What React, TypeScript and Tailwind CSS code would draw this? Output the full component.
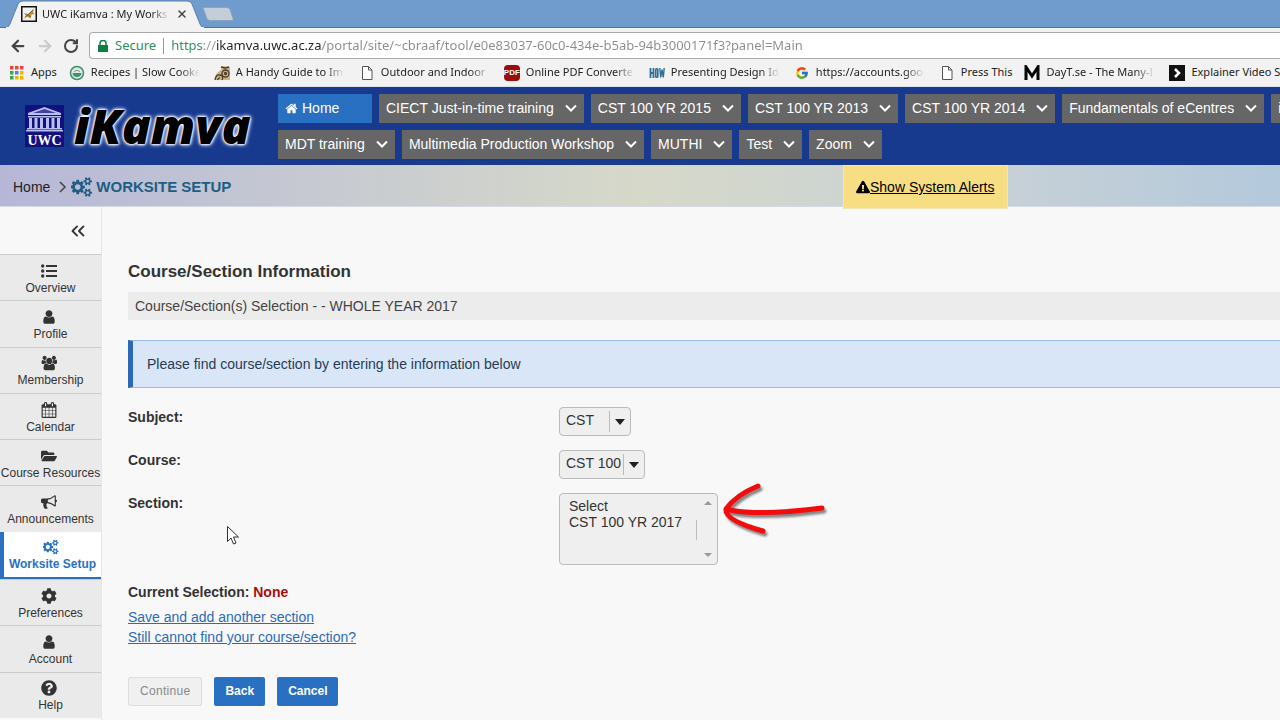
import React, { useState } from "react";
import { FaCog, FaExclamationTriangle, FaFolderOpen, FaQuestionCircle } from "react-icons/fa";
import { FcGoogle } from "react-icons/fc";
import { ArrowLeft, ArrowRight, ChevronsLeft, RotateCw, X } from "lucide-react";
import clsx from "clsx";

type IconProps = { className?: string };

const HomeIcon = ({ className }: IconProps) => (
  <svg viewBox="0 0 1792 1792" fill="currentColor" className={className}>
    <path d="M1472 992v480q0 26-19 45t-45 19h-384v-384h-256v384h-384q-26 0-45-19t-19-45v-480q0-1 .5-3t.5-3l575-474 575 474q1 2 1 6zm223-69l-62 74q-8 9-21 11h-3q-13 0-21-7l-692-577-692 577q-12 8-24 7-13-2-21-11l-62-74q-8-10-7-23.5t11-21.5l719-599q32-26 76-26t76 26l244 204v-195q0-14 9-23t23-9h192q14 0 23 9t9 23v408l219 182q10 8 11 21.5t-7 23.5z" />
  </svg>
);

const ListIcon = ({ className }: IconProps) => (
  <svg viewBox="0 0 16 16" fill="currentColor" className={className}>
    <circle cx="1.700" cy="3" r="1.700" />
    <circle cx="1.700" cy="8" r="1.700" />
    <circle cx="1.700" cy="13" r="1.700" />
    <path d="M5 2h11v2h-11zM5 7h11v2h-11zM5 12h11v2h-11z" />
  </svg>
);

const UserIcon = ({ className }: IconProps) => (
  <svg viewBox="0 0 1792 1792" fill="currentColor" className={className}>
    <path d="M1536 1399q0 109-62.5 187t-150.5 78h-854q-88 0-150.5-78t-62.5-187q0-85 8.5-160.5t31.5-152 58.5-131 94-89 134.5-34.5q131 128 313 128t313-128q76 0 134.5 34.5t94 89 58.5 131 31.5 152 8.5 160.5zm-256-887q0 159-112.5 271.5t-271.5 112.5-271.5-112.5-112.5-271.5 112.5-271.5 271.5-112.5 271.5 112.5 112.5 271.5z" />
  </svg>
);

const UsersIcon = ({ className }: IconProps) => (
  <svg viewBox="0 0 1984 1792" fill="currentColor" className={className}>
    <path d="M657 896q-162 5-265 128h-134q-82 0-138-40.5t-56-118.5q0-353 124-353 6 0 43.5 21t97.5 42.5 119 21.5q67 0 133-23-5 37-5 66 0 159 90 294zm1071 637q0 120-73 189.5t-194 69.5h-874q-121 0-194-69.5t-73-189.5q0-53 3.5-103.5t14-109 26.5-108.5 43-97.5 62-81 85.5-53.5 111.5-20q10 0 43 21.5t73 48 107 48 135 21.5 135-21.5 107-48 73-48 43-21.5q61 0 111.5 20t85.5 53.5 62 81 43 97.5 26.5 108.5 14 109 3.5 103.5zm-1024-1277q0 106-75 181t-181 75-181-75-75-181 75-181 181-75 181 75 75 181zm704 384q0 159-112.5 271.5t-271.5 112.5-271.5-112.5-112.5-271.5 112.5-271.5 271.5-112.5 271.5 112.5 112.5 271.5zm576 225q0 78-56 118.5t-138 40.5h-134q-103-123-265-128 90-135 90-294 0-29-5-66 66 23 133 23 59 0 119-21.5t97.5-42.5 43.5-21q124 0 124 353zm-128-609q0 106-75 181t-181 75-181-75-75-181 75-181 181-75 181 75 75 181z" />
  </svg>
);

const CalendarIcon = ({ className }: IconProps) => (
  <svg viewBox="0 0 1792 1792" fill="currentColor" className={className}>
    <path d="M192 1664h288v-288h-288v288zm352 0h320v-288h-320v288zm-352-352h288v-320h-288v320zm352 0h320v-320h-320v320zm-352-384h288v-288h-288v288zm736 736h320v-288h-320v288zm-384-736h320v-288h-320v288zm768 736h288v-288h-288v288zm-384-352h320v-320h-320v320zm-352-864v-288q0-13-9.5-22.5t-22.5-9.5h-64q-13 0-22.5 9.5t-9.5 22.5v288q0 13 9.5 22.5t22.5 9.5h64q13 0 22.5-9.5t9.5-22.5zm736 864h288v-320h-288v320zm-384-384h320v-288h-320v288zm384 0h288v-288h-288v288zm32-480v-288q0-13-9.5-22.5t-22.5-9.5h-64q-13 0-22.5 9.5t-9.5 22.5v288q0 13 9.5 22.5t22.5 9.5h64q13 0 22.5-9.5t9.5-22.5zm384-64v1280q0 52-38 90t-90 38h-1408q-52 0-90-38t-38-90v-1280q0-52 38-90t90-38h128v-96q0-66 47-113t113-47h64q66 0 113 47t47 113v96h384v-96q0-66 47-113t113-47h64q66 0 113 47t47 113v96h128q52 0 90 38t38 90z" />
  </svg>
);

const BullhornIcon = ({ className }: IconProps) => (
  <svg viewBox="0 0 1792 1792" fill="currentColor" className={className}>
    <path d="M1664 640q53 0 90.5 37.5t37.5 90.5-37.5 90.5-90.5 37.5v384q0 52-38 90t-90 38q-417-347-812-380-58 19-91 66t-31 100.5 40 92.5q-20 33-23 65.5t6 58 33.5 55 48 50 61.5 50.5q-29 58-111.5 83t-168.5 11.5-132-55.5q-7-23-29.5-87.5t-32-94.5-23-89-15-101 3.5-98.5 22-110.5h-122q-66 0-113-47t-47-113v-192q0-66 47-113t113-47h480q435 0 896-384 52 0 90 38t38 90v384zm-128 604v-954q-394 302-768 343v270q377 42 768 341z" />
  </svg>
);

const CogsIcon = ({ className }: IconProps) => (
  <svg viewBox="0 0 1920 1792" fill="currentColor" className={className}>
    <path d="M832 896q0-106-75-181t-181-75-181 75-75 181 75 181 181 75 181-75 75-181zm768 512q0-52-38-90t-90-38-90 38-38 90q0 53 37.5 90.5t90.5 37.5 90.5-37.5 37.5-90.5zm0-1024q0-52-38-90t-90-38-90 38-38 90q0 53 37.5 90.5t90.5 37.5 90.5-37.5 37.5-90.5zm-384 421v185q0 10-7 19.5t-16 10.5l-155 24q-11 35-32 76 34 48 90 115 7 11 7 20 0 12-7 19-23 30-82.5 89.5t-78.5 59.5q-11 0-21-7l-115-90q-37 19-77 31-11 108-23 155-7 24-30 24h-186q-11 0-20-7.5t-10-17.5l-23-153q-34-10-75-31l-118 89q-7 7-20 7-11 0-21-8-144-133-144-160 0-9 7-19 10-14 41-53t47-61q-23-44-35-82l-152-24q-10-1-17-9.5t-7-19.5v-185q0-10 7-19.5t16-10.5l155-24q11-35 32-76-34-48-90-115-7-11-7-20 0-12 7-20 22-30 82-89t79-59q11 0 21 7l115 90q34-18 77-32 11-108 23-154 7-24 30-24h186q11 0 20 7.5t10 17.5l23 153q34 10 75 31l118-89q8-7 20-7 11 0 21 8 144 133 144 160 0 8-7 19-12 16-42 54t-45 60q23 48 34 82l152 23q10 2 17 10.5t7 19.5zm640 533v140q0 16-149 31-12 27-30 52 51 113 51 138 0 4-4 7-122 71-124 71-8 0-46-47t-52-68q-20 2-30 2t-30-2q-14 21-52 68t-46 47q-2 0-124-71-4-3-4-7 0-25 51-138-18-25-30-52-149-15-149-31v-140q0-16 149-31 13-29 30-52-51-113-51-138 0-4 4-7 4-2 35-20t59-34 30-16q8 0 46 46.5t52 67.5q20-2 30-2t30 2q51-71 92-112l6-2q4 0 124 70 4 3 4 7 0 25-51 138 17 23 30 52 149 15 149 31zm0-1024v140q0 16-149 31-12 27-30 52 51 113 51 138 0 4-4 7-122 71-124 71-8 0-46-47t-52-68q-20 2-30 2t-30-2q-14 21-52 68t-46 47q-2 0-124-71-4-3-4-7 0-25 51-138-18-25-30-52-149-15-149-31v-140q0-16 149-31 13-29 30-52-51-113-51-138 0-4 4-7 4-2 35-20t59-34 30-16q8 0 46 46.5t52 67.5q20-2 30-2t30 2q51-71 92-112l6-2q4 0 124 70 4 3 4 7 0 25-51 138 17 23 30 52 149 15 149 31z" />
  </svg>
);

const PageIcon = () => (
  <svg viewBox="0 0 16 16" fill="#fff" stroke="#555" className="size-4">
    <path d="M3.5 1.5h6l3.5 3.5v9.5h-9.5z" />
    <path d="M9.5 1.5v3.5h3.5" fill="none" />
  </svg>
);

const AppsIcon = () => (
  <svg viewBox="0 0 14 14" className="size-[14px]">
    {["#e8453c", "#e8453c", "#e8453c", "#34a853", "#4285f4", "#f4b400", "#34a853", "#f4b400", "#f4b400"].map(
      (fill, i) => (
        <rect key={i} x={(i % 3) * 5} y={Math.floor(i / 3) * 5} width="3.5" height="3.5" fill={fill} />
      )
    )}
  </svg>
);

const RecipesIcon = () => (
  <svg viewBox="0 0 16 16" className="size-4">
    <circle cx="8" cy="8" r="6.5" fill="#dfe9e2" stroke="#3f8f72" strokeWidth="1.5" />
    <path d="M3.500 8h9q-.5 4-4.500 4t-4.500-4z" fill="#3f8f72" />
    <path d="M5 6.500q3-2.500 6 0" fill="none" stroke="#8a9a90" />
  </svg>
);

const SpiralIcon = () => (
  <svg viewBox="0 0 16 16" className="size-4">
    <path d="M1 14q0-6 6-9l1-4 8 1v13h-15z" fill="#c9b48a" />
    <g fill="none" stroke="#4a3b24" strokeWidth="1.300">
      <circle cx="11.500" cy="8.500" r="3.500" />
      <circle cx="11.500" cy="8.500" r="1" />
      <path d="M1 15q1-6 5-5t2 5M3.500 15q1-2.500 2.500-2M7 2l4 1 4-1" />
    </g>
  </svg>
);

const PdfIcon = () => (
  <span className="flex size-4 items-center justify-center rounded-sm bg-[#9b0d0d] font-['Liberation_Sans',sans-serif] text-[8px] font-bold text-white">
    PDF
  </span>
);

const HowIcon = () => (
  <svg viewBox="0 0 16 16" fill="none" stroke="#2f6f95" className="size-4">
    <path d="M1.500 3v10M4.500 3v10M1.500 8h3" strokeWidth="1.800" />
    <rect x="6.800" y="3.800" width="2" height="8.500" rx=".8" strokeWidth="1.600" />
    <path d="M10.800 3l.9 9.500 1.300-8 1.300 8 .9-9.500" strokeWidth="1.400" />
  </svg>
);

const MIcon = () => (
  <svg viewBox="0 0 16 16" className="size-4">
    <path d="M2 15v-13l6 9 6-9v13" fill="none" stroke="#000" strokeWidth="3" />
  </svg>
);

const ExplainerIcon = () => (
  <svg viewBox="0 0 16 16" className="size-4">
    <rect width="16" height="16" fill="#111" />
    <path d="M6 4l4 4-4 4" fill="none" stroke="#fff" strokeWidth="2.5" />
  </svg>
);

const KamvaFavicon = () => (
  <svg viewBox="0 0 16 16" className="size-4 shrink-0">
    <rect x=".75" y=".75" width="14.5" height="14.5" fill="#eef0f2" stroke="#111" strokeWidth="1.5" />
    <path d="M2.500 13l2.500-3-2-3 4 1 6-5.500-1 3.500 1.500 2-3 .5-1 4-3-2z" fill="#b98d3a" />
    <path d="M4 11l4-3 4-4M6 9l4 2" stroke="#6f5520" strokeWidth=".7" fill="none" />
  </svg>
);

const ChevronDownIcon = () => (
  <svg viewBox="0 0 12 12" fill="none" stroke="currentColor" strokeWidth="2" className="size-3">
    <path d="M1 3.500l5 5 5-5" />
  </svg>
);

const UwcLogo = () => (
  <svg viewBox="0 0 39 42" className="h-[42px] w-[39px]" role="img" aria-label="UWC">
    <rect width="39" height="42" fill="#10107f" />
    <g fill="#b9bdf0">
      <path d="M3 8l16.5-6 16.5 6v2h-33z" />
      <path d="M3 11h33v1.5h-33zM2 23h35v1.5h-35zM1 25h37v1.500h-37z" />
      <path d="M4 13h3v10h-3zM9.500 13h3v10h-3zM15 13h3v10h-3zM21 13h3v10h-3zM26.500 13h3v10h-3zM32 13h3v10h-3z" />
    </g>
    <path d="M8 8l11.500-4 11.500 4z" fill="#3b3fa8" />
    <text x="19.500" y="40" textAnchor="middle" fill="#fff" fontSize="14" fontWeight="bold" fontFamily="Liberation Serif, serif">
      UWC
    </text>
  </svg>
);

const bookmarks = [
  { label: "Apps", icon: <AppsIcon /> },
  { label: "Recipes | Slow Cooke", icon: <RecipesIcon />, fade: true },
  { label: "A Handy Guide to Im", icon: <SpiralIcon />, fade: true },
  { label: "Outdoor and Indoor |", icon: <PageIcon />, fade: true },
  { label: "Online PDF Converte", icon: <PdfIcon />, fade: true },
  { label: "Presenting Design Ide", icon: <HowIcon />, fade: true },
  { label: "https://accounts.goog", icon: <FcGoogle className="size-[14px]" />, fade: true },
  { label: "Press This", icon: <PageIcon /> },
  { label: "DayT.se - The Many-I", icon: <MIcon />, fade: true },
  { label: "Explainer Video S", icon: <ExplainerIcon /> },
];

const sites = [
  "CIECT Just-in-time training",
  "CST 100 YR 2015",
  "CST 100 YR 2013",
  "CST 100 YR 2014",
  "Fundamentals of eCentres",
  "iKamva",
  "MDT training",
  "Multimedia Production Workshop",
  "MUTHI",
  "Test",
  "Zoom",
];

const tools = [
  { label: "Overview", Icon: ListIcon },
  { label: "Profile", Icon: UserIcon },
  { label: "Membership", Icon: UsersIcon },
  { label: "Calendar", Icon: CalendarIcon },
  { label: "Course Resources", Icon: FaFolderOpen },
  { label: "Announcements", Icon: BullhornIcon },
  { label: "Worksite Setup", Icon: CogsIcon, current: true },
  { label: "Preferences", Icon: FaCog },
  { label: "Account", Icon: UserIcon },
  { label: "Help", Icon: FaQuestionCircle },
];

const BrowserChrome = () => {
  const [url, setUrl] = useState(
    "https://ikamva.uwc.ac.za/portal/site/~cbraaf/tool/e0e83037-60c0-434e-b5ab-94b3000171f3?panel=Main"
  );

  return (
    <div className="bg-[#f2f2f2] font-['Noto_Sans','Open_Sans',sans-serif] text-[#444]">
      <div className="flex h-7 border-b border-[#4d72a0] bg-[#6f9bcd]">
        <div className="relative -mb-px flex h-7 w-[198px] items-center pl-[21px] pr-3">
          <svg viewBox="0 0 198 28" preserveAspectRatio="none" className="absolute inset-0 ml-[6px] h-full w-full">
            <path d="M0 28q3-1 4-4l8-20q1-3 5-3h164q4 0 5 3l8 20q1 3 4 4z" fill="#f2f2f2" stroke="#5b7fae" />
            <path d="M0 28h198" stroke="#f2f2f2" strokeWidth="2" />
          </svg>
          <div className="relative flex items-center">
            <KamvaFavicon />
            <span className="ml-[5px] w-[128px] overflow-hidden whitespace-nowrap text-[11px] text-[#222] [mask-image:linear-gradient(90deg,#000_85%,transparent)]">
              UWC iKamva : My Works
            </span>
            <button type="button" aria-label="Close tab" className="ml-[6px]">
              <X className="size-3" strokeWidth={3} />
            </button>
          </div>
        </div>
        <button type="button" aria-label="New tab" className="ml-1 self-center">
          <svg viewBox="0 0 32 14" className="h-[14px] w-8">
            <path d="M1 1q0-.5 1-.5h23q2 0 3 2l3 9q.5 2-1 2h-22q-2 0-3-2z" fill="#c5cdd8" stroke="#8ba4c4" />
          </svg>
        </button>
      </div>

      <div className="flex items-center pl-[9px] pt-1">
        <button type="button" aria-label="Back">
          <ArrowLeft className="size-[18px]" strokeWidth={3} />
        </button>
        <button type="button" aria-label="Forward" className="ml-[9px] text-[#ccc]">
          <ArrowRight className="size-[18px]" strokeWidth={3} />
        </button>
        <button type="button" aria-label="Reload" className="ml-[9px]">
          <RotateCw className="size-4" strokeWidth={3} />
        </button>
        <div className="ml-[10px] flex h-[27px] flex-1 items-center rounded-l border border-r-0 border-[#aaa] bg-white pl-2 text-[13px]">
          <svg viewBox="0 0 10 12" className="h-3 w-[10px]">
            <path d="M0 5h10v7h-10z" fill="#0b8043" />
            <path d="M2 5v-2q0-2.500 3-2.500t3 2.500v2" fill="none" stroke="#0b8043" strokeWidth="1.5" />
          </svg>
          <span className="ml-[7px] text-[#2a8f5c]">Secure</span>
          <span className="mx-[7px] h-4 w-px bg-[#999]" />
          <input
            type="text"
            aria-label="Address"
            value={url}
            onChange={(e) => setUrl(e.target.value)}
            className="min-w-0 flex-1 bg-[linear-gradient(90deg,#2a8f5c_33px,#999_33px,#999_45px,#222_45px,#222_151px,#8c8c8c_151px)] bg-clip-text text-transparent caret-black outline-none"
          />
        </div>
      </div>

      <nav aria-label="Bookmarks" className="flex h-7 items-center gap-3 overflow-hidden border-b border-[#dde1ea] pl-[9px] text-[11px]">
        {bookmarks.map(({ label, icon, fade }) => (
          <a key={label} href="#" className="flex shrink-0 items-center gap-[6px] whitespace-nowrap text-[#222]">
            <span className="flex w-4 justify-center">{icon}</span>
            <span
              className={clsx(
                fade && "w-[111px] [mask-image:linear-gradient(90deg,#000_80%,transparent_98%)]"
              )}
            >
              {label}
            </span>
          </a>
        ))}
      </nav>
    </div>
  );
};

const SiteHeader = () => (
  <header className="flex h-[78px] overflow-hidden bg-[#173a8e]">
    <a href="#" className="flex w-[278px] shrink-0 items-center pl-[25px]">
      <UwcLogo />
      <span className="ml-[10px] font-['Open_Sans','Noto_Sans',sans-serif] text-[48px] font-extrabold italic leading-none text-black [text-shadow:0_0_2px_#fff,0_0_2px_#fff,0_0_3px_#fff,0_0_4px_#cdd6ff,0_0_5px_#cdd6ff]">
        iKamva
      </span>
    </a>
    <nav aria-label="Sites" className="-mr-24 flex flex-1 flex-wrap content-start gap-[7px] pt-[7px] text-sm text-white">
      <a href="#" className="flex h-[29px] w-[94px] items-center gap-1 bg-[#2a70c2] px-[7px] pb-px">
        <HomeIcon className="size-[13px]" />
        Home
      </a>
      {sites.map((site) => (
        <div key={site} className="flex h-[29px] items-center bg-[#666] px-[7px] pb-px">
          <a href="#">{site}</a>
          <button type="button" aria-label={`${site} tools`} className="ml-[11px]">
            <ChevronDownIcon />
          </button>
        </div>
      ))}
    </nav>
  </header>
);

const Breadcrumb = () => (
  <div className="relative flex h-[42px] items-center border-b border-[#d5dae2] bg-[linear-gradient(90deg,#b6b7d8,#c4c7d2_21%,#d6d9c9_50%,#c9d1d6_76%,#b3c9dc)] pl-[13px] pt-[3px]">
    <a href="#" className="text-sm text-[#222]">
      Home
    </a>
    <svg viewBox="0 0 8 12" fill="none" stroke="#444" strokeWidth="1.5" className="ml-[9px] h-3 w-2">
      <path d="M1 1l5 5-5 5" />
    </svg>
    <h1 className="ml-1 flex items-center gap-[3px] text-[15px] font-bold text-[#205e83]">
      <CogsIcon className="h-5 w-[22px]" />
      WORKSITE SETUP
    </h1>
    <a
      href="#"
      className="absolute left-[843px] top-0 flex h-[44px] items-center border border-[#f3e6b4] bg-[#f7de83] px-3 text-sm text-black underline"
    >
      <FaExclamationTriangle className="size-[14px]" />
      Show System Alerts
    </a>
  </div>
);

const Sidebar = () => (
  <aside className="flex w-[102px] shrink-0 flex-col border-r border-[#e6e6e6] pb-[2px] text-[12px] text-[#333]">
    <button type="button" aria-label="Collapse menu" className="flex h-[47px] items-center justify-end pr-3">
      <ChevronsLeft className="size-[22px]" />
    </button>
    <nav aria-label="Tools" className="flex flex-1 flex-col">
      {tools.map(({ label, Icon, current }) => (
        <a
          key={label}
          href="#"
          aria-current={current ? "page" : undefined}
          className={clsx(
            "flex flex-1 flex-col items-center justify-center whitespace-nowrap pt-1",
            current
              ? "border-b-2 border-l-4 border-[#2a70c2] bg-white font-bold text-[#2a70c2]"
              : "border-t border-[#ccc] bg-[#eaeaea]"
          )}
        >
          <Icon className="mr-1 h-4 w-4" />
          {label}
        </a>
      ))}
    </nav>
  </aside>
);

const PullDown = ({ id, value, className }: { id: string; value: string; className: string }) => (
  <div className={clsx("relative flex h-[29px]", className)}>
    <select
      id={id}
      className="w-full appearance-none rounded-sm border border-[#bbb] bg-[#efefef] pb-[3px] pl-[6px] text-sm text-[#333]"
    >
      <option>{value}</option>
    </select>
    <span className="pointer-events-none absolute inset-y-1 right-0 flex w-[22px] items-center justify-center border-l border-[#bbb] pr-[2px]">
      <svg viewBox="0 0 10 6" className="h-[6px] w-[10px]">
        <path d="M0 0h10l-5 6z" fill="#222" />
      </svg>
    </span>
  </div>
);

const RedArrow = () => (
  <svg viewBox="0 0 110 60" className="ml-px mt-[-15px] h-[60px] w-[110px]" fill="none" strokeLinecap="round" strokeLinejoin="round">
    <g stroke="#555" strokeWidth="5" opacity=".7" className="blur-[1px]" transform="translate(2 3)">
      <path d="M39 8q-22 9-32 23-2 11 37 22" />
      <path d="M11 32q30 6 92-2" />
    </g>
    <g stroke="#f20d0d" strokeWidth="5">
      <path d="M39 8q-22 9-32 23-2 11 37 22" />
      <path d="M11 32q30 6 92-2" />
    </g>
  </svg>
);

const SectionForm = () => (
  <main className="min-w-0 flex-1 pl-[26px] pt-[54px] text-sm text-[#333]">
    <h2 className="text-[17px] font-bold leading-[22px]">Course/Section Information</h2>
    <p className="mt-[9px] bg-[#ececec] px-[7px] py-1 text-[#444]">
      Course/Section(s) Selection - - WHOLE YEAR 2017
    </p>
    <p className="mt-5 border border-l-[5px] border-r-0 border-[#9dbce3] border-l-[#2a69b4] bg-[#d9e6f7] px-[14px] py-[13px] text-[#263c55]">
      Please find course/section by entering the information below
    </p>

    <form onSubmit={(e) => e.preventDefault()}>
      <div className="mt-[19px] grid grid-cols-[431px_1fr] gap-y-[14px]">
        <label htmlFor="subject" className="font-bold">
          Subject:
        </label>
        <PullDown id="subject" value="CST" className="w-[72px]" />
        <label htmlFor="course" className="font-bold">
          Course:
        </label>
        <PullDown id="course" value="CST 100" className="w-[86px]" />
        <label htmlFor="section" className="font-bold">
          Section:
        </label>
        <div className="flex h-[72px]">
          <div className="relative flex w-[159px]">
            <select
              id="section"
              multiple
              className="w-full appearance-none overflow-hidden rounded-sm border border-[#bbb] bg-[#efefef] py-1 pl-[7px] text-sm leading-4 text-[#333]"
            >
              <option className="min-h-0 p-0 px-[2px] leading-4">Select</option>
              <option className="min-h-0 p-0 px-[2px] leading-4">CST 100 YR 2017</option>
            </select>
            <svg viewBox="0 0 20 72" className="pointer-events-none absolute right-0 top-0 h-[72px] w-5">
              <path d="M6 12l4-4 4 4zM6 60l4 4 4-4z" fill="#999" />
            </svg>
            <span className="pointer-events-none absolute right-[21px] top-[27px] h-5 w-px bg-[#bbb]" />
          </div>
          <RedArrow />
        </div>
      </div>

      <p className="mt-[17px] font-bold">
        Current Selection: <span className="text-[#a80d0d]">None</span>
      </p>
      <p className="mt-[5px]">
        <a href="#" className="text-[#2c6bb8] underline">
          Save and add another section
        </a>
      </p>
      <p>
        <a href="#" className="text-[#2c6bb8] underline">
          Still cannot find your course/section?
        </a>
      </p>

      <div className="mt-[30px] flex gap-3 text-[12px]">
        <button type="submit" disabled className="h-[29px] rounded-xs border border-[#ddd] bg-[#f0f0f0] px-[11px] tracking-wide text-[#888]">
          Continue
        </button>
        <button type="button" className="h-[29px] rounded-xs bg-[#2a70c2] px-[11px] font-bold text-white">
          Back
        </button>
        <button type="button" className="h-[29px] rounded-xs bg-[#2a70c2] px-[11px] font-bold text-white">
          Cancel
        </button>
      </div>
    </form>
  </main>
);

const MousePointer = () => (
  <svg viewBox="0 0 12 19" className="pointer-events-none absolute left-[227px] top-[526px] h-[19px] w-3">
    <path d="M.5.5v15l3.5-3.5 2.500 6 2.500-1-2.500-6h5z" fill="#fff" stroke="#333" />
  </svg>
);

export default function App() {
  return (
    <div className="relative flex min-h-screen flex-col overflow-hidden bg-[#f8f8f8] font-['Liberation_Sans',Arial,sans-serif]">
      <BrowserChrome />
      <SiteHeader />
      <Breadcrumb />
      <div className="flex flex-1">
        <Sidebar />
        <SectionForm />
      </div>
      <MousePointer />
    </div>
  );
}
